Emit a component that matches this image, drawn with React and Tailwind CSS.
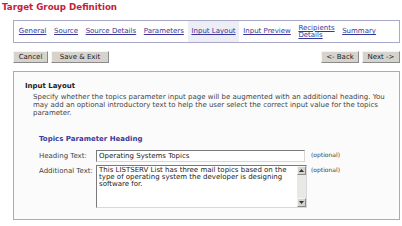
import React from "react";

const tabs = [
  { label: "General" },
  { label: "Source" },
  { label: "Source Details" },
  { label: "Parameters" },
  { label: "Input Layout", active: true },
  { label: "Input Preview" },
  { label: "Recipients\nDetails" },
  { label: "Summary" },
];

function Btn({ children, className = "" }) {
  return (
    <div
      className={`h-[12px] flex items-center justify-center bg-[#d6d3cc] border border-t-[#f4f4f4] border-l-[#f4f4f4] border-r-[#8a8a8a] border-b-[#8a8a8a] text-[#222] ${className}`}
    >
      {children}
    </div>
  );
}

export default function App() {
  return (
    <div
      className="w-[402px] h-[226px] bg-white overflow-hidden text-[7px] leading-[8px] text-[#444]"
      style={{ fontFamily: '"DejaVu Sans", Verdana, sans-serif' }}
    >
      {/* title */}
      <div className="pl-[2px] pt-[1px] h-[20px] text-[8.7px] leading-[12px] font-bold text-[#c41e3a]">
        Target Group Definition
      </div>

      {/* tabs */}
      <div className="ml-[13px] w-[387px] h-[23px] border border-[#a8a8c8] flex items-stretch pl-[1px]">
        {tabs.map((t) => (
          <div
            key={t.label}
            className={`flex items-center px-[3.8px] ${t.active ? "bg-[#ededf6]" : ""}`}
          >
            <span className="text-[#35359a] underline whitespace-pre leading-[7px]">{t.label}</span>
          </div>
        ))}
      </div>

      {/* buttons */}
      <div className="mt-[8px] ml-[13px] w-[387px] flex gap-[3px]">
        <Btn className="w-[35px]">Cancel</Btn>
        <Btn className="w-[58px]">Save &amp; Exit</Btn>
        <div className="flex-1" />
        <Btn className="w-[38px]">&lt;- Back</Btn>
        <Btn className="w-[38px]">Next -&gt;</Btn>
      </div>

      {/* content */}
      <div className="mt-[8px] ml-[13px] w-[387px] h-[149px] border border-[#a8a8c8] bg-[#fbfbfb] pl-[11px] pt-[10px]">
        <div className="font-bold text-[#222]">Input Layout</div>
        <p className="mt-[3px] pl-[8px] pr-[10px]">
          Specify whether the topics parameter input page will be augmented with an additional heading. You may add an optional introductory text to help the user select the correct input value for the topics parameter.
        </p>
        <div className="mt-[18px] pl-[14px] font-bold text-[#3c3c9a]">Topics Parameter Heading</div>

        <div className="mt-[7px] pl-[14px] flex items-start">
          <div className="w-[57px] pt-[2px]">Heading Text:</div>
          <div className="w-[209px] h-[12px] border border-t-[#7a7a7a] border-l-[#7a7a7a] border-r-[#d8d8d8] border-b-[#d8d8d8] bg-white pl-[2px] leading-[10px] text-[#222]">
            Operating Systems Topics
          </div>
          <div className="pl-[6px] pt-[1px] text-[6px]">(optional)</div>
        </div>

        <div className="mt-[3px] pl-[14px] flex items-start">
          <div className="w-[57px] pt-[2px]">Additional Text:</div>
          <div className="w-[211px] h-[43px] border border-t-[#7a7a7a] border-l-[#7a7a7a] border-r-[#d8d8d8] border-b-[#d8d8d8] bg-white flex">
            <div className="flex-1 pl-[2px] pt-[1px] pr-[2px] leading-[7px] text-[#222]">
              This LISTSERV List has three mail topics based on the type of operating system the developer is designing software for.
            </div>
            <div className="w-[9px] bg-[#e8e8e4] flex flex-col justify-between">
              <div className="h-[9px] bg-[#d6d3cc] border border-t-[#f4f4f4] border-l-[#f4f4f4] border-r-[#8a8a8a] border-b-[#8a8a8a] flex items-center justify-center">
                <svg width="5" height="3" viewBox="0 0 5 3"><path d="M2.5 0L5 3H0z" fill="#333" /></svg>
              </div>
              <div className="h-[9px] bg-[#d6d3cc] border border-t-[#f4f4f4] border-l-[#f4f4f4] border-r-[#8a8a8a] border-b-[#8a8a8a] flex items-center justify-center">
                <svg width="5" height="3" viewBox="0 0 5 3"><path d="M0 0H5L2.5 3z" fill="#333" /></svg>
              </div>
            </div>
          </div>
          <div className="pl-[4px] pt-[1px] text-[6px]">(optional)</div>
        </div>
      </div>
    </div>
  );
}
